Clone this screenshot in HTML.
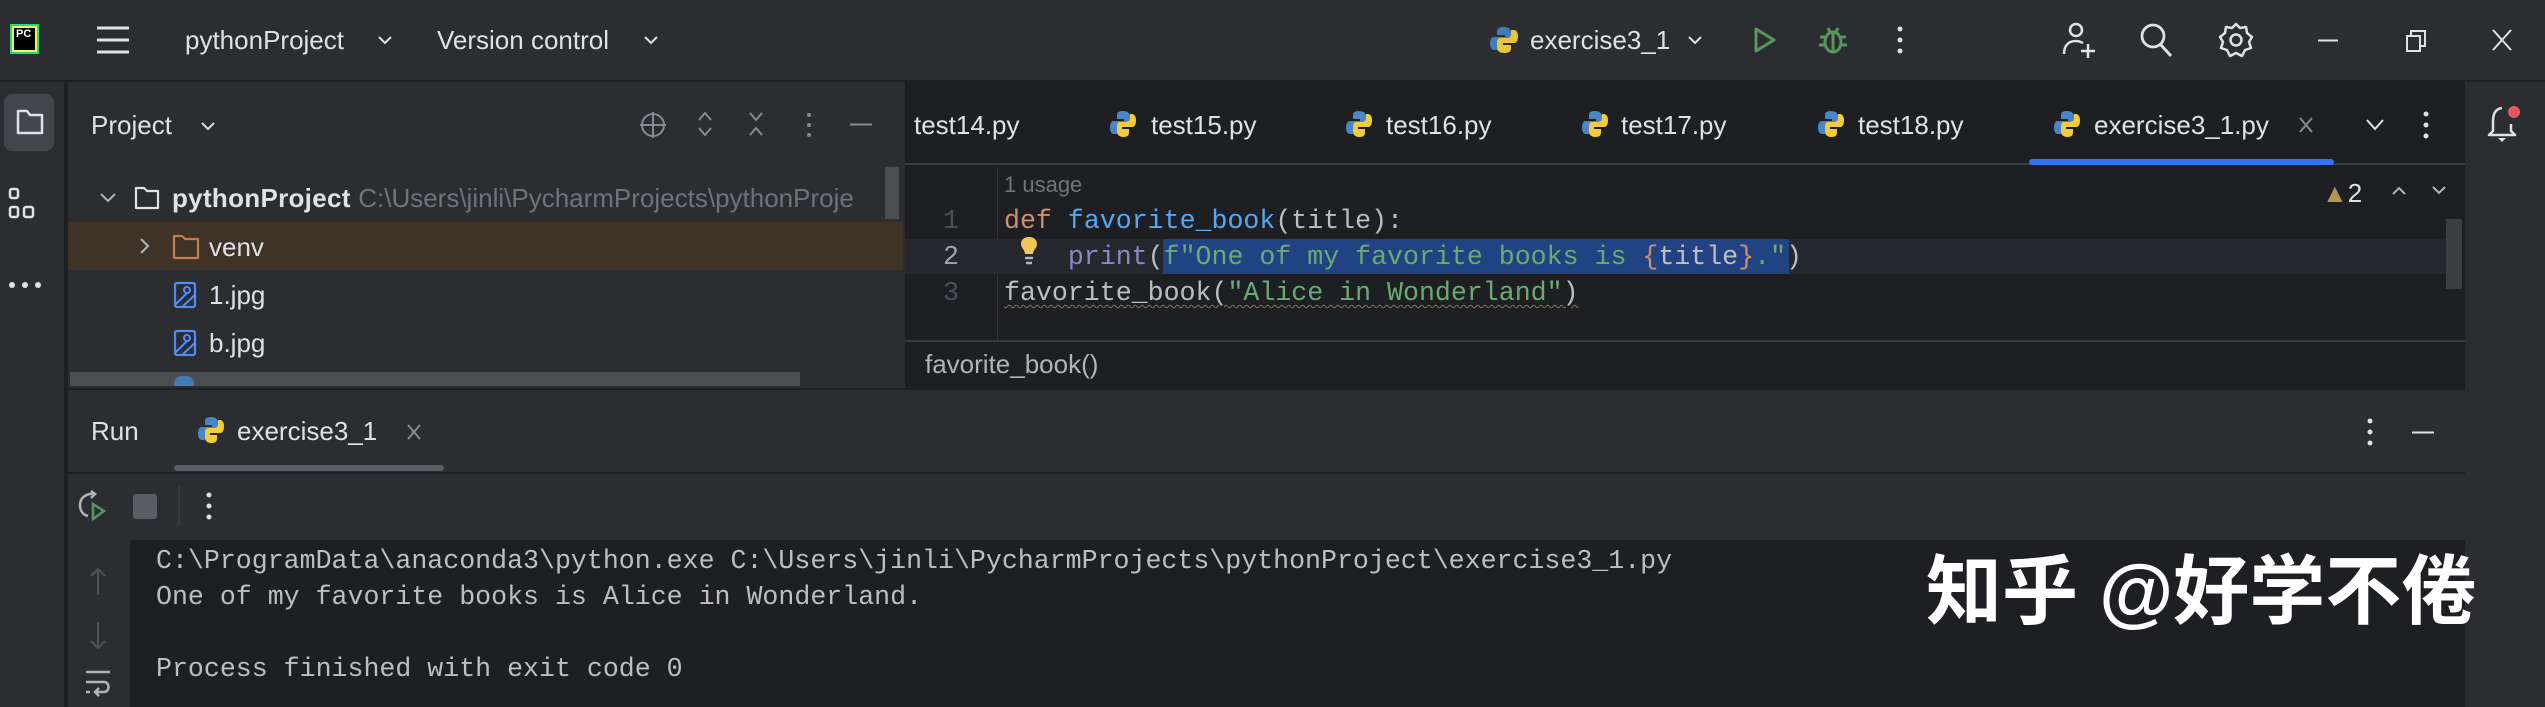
<!DOCTYPE html>
<html><head><meta charset="utf-8"><style>
*{margin:0;padding:0;box-sizing:border-box}
body{width:2545px;height:707px;background:#1e1f22;position:relative;overflow:hidden;font-family:"Liberation Sans","Noto Sans CJK SC",sans-serif;color:#dfe1e5}
.a{position:absolute;white-space:pre}
.s{font-size:26px;line-height:30px}
.m{font-family:"Liberation Mono",monospace;font-size:26.6px;line-height:36px}
.g{color:#6f737a}
svg{position:absolute;overflow:visible}
</style></head><body>
<!-- top bar -->
<div class="a" style="left:0;top:0;width:2545px;height:80px;background:#2b2d30"></div>
<div class="a" style="left:10px;top:24px;width:29px;height:30px;background:#21d789;"></div>
<div class="a" style="left:12px;top:26px;width:25px;height:26px;background:#fcf84a"></div>
<div class="a" style="left:14px;top:28px;width:21px;height:22px;background:#000;color:#fff;font-size:11px;font-weight:bold;line-height:12px;padding-left:2px;white-space:normal">PC<br>_</div>
<svg style="left:97px;top:26px" width="32" height="28"><path d="M0 2H32M0 14H32M0 26H32" stroke="#dfe1e5" stroke-width="3"/></svg>
<div class="a s" style="left:185px;top:25px">pythonProject</div>
<svg style="left:378px;top:36px" width="14" height="9"><path d="M1 1L7 7L13 1" stroke="#dfe1e5" stroke-width="2" fill="none"/></svg>
<div class="a s" style="left:437px;top:25px">Version control</div>
<svg style="left:644px;top:36px" width="14" height="9"><path d="M1 1L7 7L13 1" stroke="#dfe1e5" stroke-width="2" fill="none"/></svg>
<svg style="left:1490px;top:26px" width="28" height="28"><path d="M14 1C7 1 7 4 7 6V9H15V11H4C1 11 0 14 0 18C0 22 2 24 4 24H7V20C7 17 9 16 11 16H18C20 16 21 14 21 12V6C21 3 18 1 14 1Z" fill="#3f7cb8"/><path d="M14 27C21 27 21 24 21 22V19H13V17H24C27 17 28 14 28 10C28 6 26 4 24 4H21V8C21 11 19 12 17 12H10C8 12 7 14 7 16V22C7 25 10 27 14 27Z" fill="#e8c53e"/></svg>
<div class="a s" style="left:1530px;top:25px">exercise3_1</div>
<svg style="left:1688px;top:36px" width="14" height="9"><path d="M1 1L7 7L13 1" stroke="#dfe1e5" stroke-width="2" fill="none"/></svg>
<svg style="left:1754px;top:27px" width="22" height="26"><path d="M2 2L20 13L2 24Z" stroke="#57965c" stroke-width="3" fill="none" stroke-linejoin="round"/></svg>
<svg style="left:1818px;top:25px" width="30" height="30"><ellipse cx="15" cy="17" rx="8" ry="10" stroke="#57965c" stroke-width="3" fill="none"/><path d="M15 8V27M2 12H7M23 12H28M1 20H7M23 20H29M10 3L12 7M20 3L18 7" stroke="#57965c" stroke-width="3"/></svg>
<svg style="left:1897px;top:26px" width="6" height="28"><circle cx="3" cy="3" r="2.5" fill="#dfe1e5"/><circle cx="3" cy="14" r="2.5" fill="#dfe1e5"/><circle cx="3" cy="25" r="2.5" fill="#dfe1e5"/></svg>
<svg style="left:2062px;top:22px" width="34" height="36"><circle cx="14" cy="8" r="6" stroke="#dfe1e5" stroke-width="2.5" fill="none"/><path d="M2 32C2 22 8 19 14 19C17 19 19 20 21 21M26 22V36M19 29H33" stroke="#dfe1e5" stroke-width="2.5" fill="none"/></svg>
<svg style="left:2139px;top:22px" width="34" height="36"><circle cx="14" cy="14" r="11" stroke="#dfe1e5" stroke-width="2.8" fill="none"/><path d="M22 23L32 34" stroke="#dfe1e5" stroke-width="3"/></svg>
<svg style="left:2218px;top:22px" width="36" height="36"><circle cx="18" cy="18" r="5.5" stroke="#dfe1e5" stroke-width="2.5" fill="none"/><path d="M18 2L22 6L28 5L29 11L34 15L31 20L33 26L27 28L24 34L18 31L12 34L9 28L3 26L5 20L2 15L7 11L8 5L14 6Z" stroke="#dfe1e5" stroke-width="2.5" fill="none" stroke-linejoin="round"/></svg>
<svg style="left:2318px;top:39px" width="20" height="3"><path d="M0 1.5H20" stroke="#dfe1e5" stroke-width="2"/></svg>
<svg style="left:2406px;top:30px" width="20" height="22"><rect x="1" y="6" width="13" height="15" stroke="#dfe1e5" stroke-width="2" fill="none"/><path d="M5 6V1H19V16H14" stroke="#dfe1e5" stroke-width="2" fill="none"/></svg>
<svg style="left:2492px;top:29px" width="20" height="22"><path d="M1 1L19 21M19 1L1 21" stroke="#dfe1e5" stroke-width="2"/></svg>

<!-- left strip -->
<div class="a" style="left:0;top:82px;width:66px;height:625px;background:#2b2d30;border-right:2px solid #1e1f22"></div>
<div class="a" style="left:4px;top:94px;width:50px;height:57px;background:#43454a;border-radius:8px"></div>
<svg style="left:16px;top:109px" width="28" height="26"><path d="M2 2H11L14 6H26V24H2Z" stroke="#dfe1e5" stroke-width="2.5" fill="none" stroke-linejoin="round"/></svg>
<svg style="left:9px;top:188px" width="26" height="32"><rect x="1" y="1" width="8" height="9" rx="2" stroke="#dfe1e5" stroke-width="2.5" fill="none"/><rect x="1" y="19" width="8" height="10" rx="2" stroke="#dfe1e5" stroke-width="2.5" fill="none"/><rect x="15" y="19" width="9" height="10" rx="2" stroke="#dfe1e5" stroke-width="2.5" fill="none"/></svg>
<svg style="left:8px;top:281px" width="34" height="8"><circle cx="4" cy="4" r="3" fill="#dfe1e5"/><circle cx="17" cy="4" r="3" fill="#dfe1e5"/><circle cx="30" cy="4" r="3" fill="#dfe1e5"/></svg>

<!-- project panel -->
<div class="a" style="left:68px;top:82px;width:835px;height:306px;background:#2b2d30"></div>
<div class="a s" style="left:91px;top:110px">Project</div>
<svg style="left:201px;top:122px" width="14" height="9"><path d="M1 1L7 7L13 1" stroke="#dfe1e5" stroke-width="2" fill="none"/></svg>
<svg style="left:640px;top:110px" width="28" height="30"><circle cx="13" cy="15" r="11" stroke="#868a91" stroke-width="2" fill="none"/><path d="M13 2V28M0 15H26" stroke="#868a91" stroke-width="2"/></svg>
<svg style="left:697px;top:111px" width="16" height="26"><path d="M2 9L8 2L14 9M2 17L8 24L14 17" stroke="#868a91" stroke-width="2" fill="none"/></svg>
<svg style="left:748px;top:111px" width="16" height="26"><path d="M2 2L8 9L14 2M2 24L8 17L14 24" stroke="#868a91" stroke-width="2" fill="none"/></svg>
<svg style="left:806px;top:112px" width="6" height="26"><circle cx="3" cy="3" r="2" fill="#868a91"/><circle cx="3" cy="13" r="2" fill="#868a91"/><circle cx="3" cy="23" r="2" fill="#868a91"/></svg>
<svg style="left:850px;top:123px" width="22" height="3"><path d="M0 1.5H22" stroke="#868a91" stroke-width="2"/></svg>

<svg style="left:100px;top:193px" width="16" height="10"><path d="M1 1L8 8L15 1" stroke="#b0b3b8" stroke-width="2" fill="none"/></svg>
<svg style="left:134px;top:186px" width="26" height="24"><path d="M2 2H10L13 5H24V22H2Z" stroke="#dfe1e5" stroke-width="2.2" fill="none" stroke-linejoin="round"/></svg>
<div class="a s" style="left:172px;top:183px;font-weight:bold;letter-spacing:0.3px">pythonProject <span style="font-weight:normal;color:#6f737a;letter-spacing:0">C:\Users\jinli\PycharmProjects\pythonProje</span></div>
<div class="a" style="left:885px;top:167px;width:14px;height:52px;background:#4b4d50"></div>
<div class="a" style="left:68px;top:222px;width:835px;height:48px;background:#3e3326"></div>
<svg style="left:140px;top:238px" width="10" height="16"><path d="M1 1L8 8L1 15" stroke="#b0b3b8" stroke-width="2" fill="none"/></svg>
<svg style="left:172px;top:234px" width="28" height="26"><path d="M2 2H10L13 5H26V24H2Z" stroke="#c77b50" stroke-width="2.2" fill="none" stroke-linejoin="round"/></svg>
<div class="a s" style="left:209px;top:232px">venv</div>
<svg style="left:174px;top:282px" width="22" height="26"><rect x="1" y="1" width="20" height="24" rx="2" stroke="#548af7" stroke-width="2.2" fill="none"/><circle cx="13" cy="8" r="3" stroke="#548af7" stroke-width="2" fill="none"/><path d="M1 23L13 11M8 25L21 13" stroke="#548af7" stroke-width="2"/></svg>
<div class="a s" style="left:209px;top:280px">1.jpg</div>
<svg style="left:174px;top:330px" width="22" height="26"><rect x="1" y="1" width="20" height="24" rx="2" stroke="#548af7" stroke-width="2.2" fill="none"/><circle cx="13" cy="8" r="3" stroke="#548af7" stroke-width="2" fill="none"/><path d="M1 23L13 11M8 25L21 13" stroke="#548af7" stroke-width="2"/></svg>
<div class="a s" style="left:209px;top:328px">b.jpg</div>
<div class="a" style="left:70px;top:372px;width:730px;height:14px;background:#4b4d50"></div>
<div class="a" style="left:174px;top:376px;width:20px;height:10px;background:#3f7cb8;border-radius:8px 8px 0 0"></div>

<!-- editor -->
<div class="a" style="left:903px;top:82px;width:1562px;height:306px;background:#1e1f22;border-left:2px solid #2b2d30"></div>
<div class="a" style="left:905px;top:163px;width:1560px;height:2px;background:#393b40"></div>
<div class="a s" style="left:914px;top:110px;color:#dfe1e5">test14.py</div>
<div class="a s" style="left:1151px;top:110px">test15.py</div>
<div class="a s" style="left:1386px;top:110px">test16.py</div>
<div class="a s" style="left:1621px;top:110px">test17.py</div>
<div class="a s" style="left:1858px;top:110px">test18.py</div>
<div class="a s" style="left:2094px;top:110px">exercise3_1.py</div>
<svg style="left:2299px;top:117px" width="14" height="16"><path d="M1 1L13 15M13 1L1 15" stroke="#868a91" stroke-width="2"/></svg>
<div class="a" style="left:2029px;top:159px;width:305px;height:6px;background:#3574f0;border-radius:3px"></div>
<svg style="left:2366px;top:119px" width="18" height="12"><path d="M1 1L9 10L17 1" stroke="#dfe1e5" stroke-width="2" fill="none"/></svg>
<svg style="left:2423px;top:111px" width="6" height="28"><circle cx="3" cy="3" r="2.5" fill="#dfe1e5"/><circle cx="3" cy="14" r="2.5" fill="#dfe1e5"/><circle cx="3" cy="25" r="2.5" fill="#dfe1e5"/></svg>
<svg style="left:1110px;top:110px" width="26" height="28"><path d="M13 1C7 1 7 4 7 6V9H14V11H4C1 11 0 14 0 18C0 22 2 24 4 24H7V20C7 17 9 16 11 16H17C19 16 20 14 20 12V6C20 3 17 1 13 1Z" fill="#4a86c7"/><path d="M13 27C19 27 19 24 19 22V19H12V17H22C25 17 26 14 26 10C26 6 24 4 22 4H20V8C20 11 18 12 16 12H10C8 12 7 14 7 16V22C7 25 10 27 13 27Z" fill="#f2cc3a"/></svg>
<svg style="left:1346px;top:110px" width="26" height="28"><path d="M13 1C7 1 7 4 7 6V9H14V11H4C1 11 0 14 0 18C0 22 2 24 4 24H7V20C7 17 9 16 11 16H17C19 16 20 14 20 12V6C20 3 17 1 13 1Z" fill="#4a86c7"/><path d="M13 27C19 27 19 24 19 22V19H12V17H22C25 17 26 14 26 10C26 6 24 4 22 4H20V8C20 11 18 12 16 12H10C8 12 7 14 7 16V22C7 25 10 27 13 27Z" fill="#f2cc3a"/></svg>
<svg style="left:1582px;top:110px" width="26" height="28"><path d="M13 1C7 1 7 4 7 6V9H14V11H4C1 11 0 14 0 18C0 22 2 24 4 24H7V20C7 17 9 16 11 16H17C19 16 20 14 20 12V6C20 3 17 1 13 1Z" fill="#4a86c7"/><path d="M13 27C19 27 19 24 19 22V19H12V17H22C25 17 26 14 26 10C26 6 24 4 22 4H20V8C20 11 18 12 16 12H10C8 12 7 14 7 16V22C7 25 10 27 13 27Z" fill="#f2cc3a"/></svg>
<svg style="left:1818px;top:110px" width="26" height="28"><path d="M13 1C7 1 7 4 7 6V9H14V11H4C1 11 0 14 0 18C0 22 2 24 4 24H7V20C7 17 9 16 11 16H17C19 16 20 14 20 12V6C20 3 17 1 13 1Z" fill="#4a86c7"/><path d="M13 27C19 27 19 24 19 22V19H12V17H22C25 17 26 14 26 10C26 6 24 4 22 4H20V8C20 11 18 12 16 12H10C8 12 7 14 7 16V22C7 25 10 27 13 27Z" fill="#f2cc3a"/></svg>
<svg style="left:2054px;top:110px" width="26" height="28"><path d="M13 1C7 1 7 4 7 6V9H14V11H4C1 11 0 14 0 18C0 22 2 24 4 24H7V20C7 17 9 16 11 16H17C19 16 20 14 20 12V6C20 3 17 1 13 1Z" fill="#4a86c7"/><path d="M13 27C19 27 19 24 19 22V19H12V17H22C25 17 26 14 26 10C26 6 24 4 22 4H20V8C20 11 18 12 16 12H10C8 12 7 14 7 16V22C7 25 10 27 13 27Z" fill="#f2cc3a"/></svg>

<div class="a" style="left:997px;top:167px;width:1px;height:174px;background:#313438"></div>
<div class="a" style="left:905px;top:239px;width:1541px;height:35px;background:#26282e"></div>
<div class="a" style="left:1004px;top:172px;font-size:22px;color:#6f737a">1 usage</div>
<div class="a" style="left:2322px;top:178px;font-size:26px;color:#dfe1e5"><span style="color:#b7954a">▲</span>2</div>
<svg style="left:2392px;top:186px" width="14" height="9"><path d="M1 8L7 2L13 8" stroke="#b0b3b8" stroke-width="2" fill="none"/></svg>
<svg style="left:2432px;top:186px" width="14" height="9"><path d="M1 1L7 7L13 1" stroke="#b0b3b8" stroke-width="2" fill="none"/></svg>
<div class="a m" style="left:943px;top:203px;color:#4b5059">1</div>
<div class="a m" style="left:943px;top:239px;color:#a1a3ab">2</div>
<div class="a m" style="left:943px;top:275px;color:#4b5059">3</div>
<div class="a" style="left:1163px;top:239px;width:626px;height:35px;background:#214283"></div>
<div class="a m" style="left:1004px;top:203px;color:#bcbec4"><span style="color:#cf8e6d">def</span> <span style="color:#56a8f5">favorite_book</span>(title):</div>
<div class="a m" style="left:1004px;top:239px;color:#bcbec4">    <span style="color:#8888c6">print</span>(<span style="color:#6aab73">f"One of my favorite books is </span><span style="color:#cf8e6d">{</span>title<span style="color:#cf8e6d">}</span><span style="color:#6aab73">."</span>)</div>
<svg style="left:1020px;top:236px" width="18" height="30"><path d="M9 1C3 1 1 5 1 8C1 12 5 14 5 18H13C13 14 17 12 17 8C17 5 15 1 9 1Z" fill="#f2c55c"/><path d="M5 22H13M6 27H12" stroke="#b0b3b8" stroke-width="2.5"/></svg>
<div class="a m" style="left:1004px;top:275px;color:#bcbec4;text-decoration:underline wavy #8a7a40;text-decoration-thickness:1px;text-underline-offset:4px">favorite_book(<span style="color:#6aab73">"Alice in Wonderland"</span>)</div>
<div class="a" style="left:2446px;top:219px;width:16px;height:70px;background:#3c3e42"></div>
<div class="a" style="left:905px;top:340px;width:1560px;height:2px;background:#393b40"></div>
<div class="a s" style="left:925px;top:349px;color:#b0b3b8">favorite_book()</div>

<!-- right strip -->
<div class="a" style="left:2465px;top:82px;width:80px;height:625px;background:#2b2d30"></div>
<svg style="left:2488px;top:104px" width="34" height="40"><path d="M14 4C6 5 5 12 5 18V27L1 31H27L23 27V20" stroke="#dfe1e5" stroke-width="2.5" fill="none" stroke-linejoin="round"/><path d="M10 34H18L14 38Z" fill="#dfe1e5"/><circle cx="26" cy="8" r="6" fill="#e55765"/></svg>

<!-- run panel -->
<div class="a" style="left:68px;top:388px;width:2397px;height:84px;background:#2b2d30;border-top:2px solid #1e1f22"></div>
<div class="a s" style="left:91px;top:416px">Run</div>
<svg style="left:198px;top:416px" width="26" height="28"><path d="M13 1C7 1 7 4 7 6V9H14V11H4C1 11 0 14 0 18C0 22 2 24 4 24H7V20C7 17 9 16 11 16H17C19 16 20 14 20 12V6C20 3 17 1 13 1Z" fill="#4a86c7"/><path d="M13 27C19 27 19 24 19 22V19H12V17H22C25 17 26 14 26 10C26 6 24 4 22 4H20V8C20 11 18 12 16 12H10C8 12 7 14 7 16V22C7 25 10 27 13 27Z" fill="#f2cc3a"/></svg>
<div class="a s" style="left:237px;top:416px">exercise3_1</div>
<svg style="left:407px;top:424px" width="14" height="16"><path d="M1 1L13 15M13 1L1 15" stroke="#868a91" stroke-width="2"/></svg>
<div class="a" style="left:174px;top:465px;width:270px;height:6px;background:#5a5d63;border-radius:3px"></div>
<svg style="left:2367px;top:418px" width="6" height="28"><circle cx="3" cy="3" r="2.5" fill="#dfe1e5"/><circle cx="3" cy="14" r="2.5" fill="#dfe1e5"/><circle cx="3" cy="25" r="2.5" fill="#dfe1e5"/></svg>
<svg style="left:2412px;top:431px" width="22" height="3"><path d="M0 1.5H22" stroke="#dfe1e5" stroke-width="2"/></svg>
<div class="a" style="left:68px;top:472px;width:2397px;height:68px;background:#2b2d30;border-top:2px solid #1e1f22"></div>
<svg style="left:78px;top:490px" width="28" height="32"><path d="M16 4C8 3 2 8 2 15C2 22 6 25 10 26" stroke="#b0b3b8" stroke-width="2.5" fill="none"/><path d="M13 1L17 4L13 8" stroke="#b0b3b8" stroke-width="2.5" fill="none"/><path d="M15 14L26 21L15 29Z" stroke="#57965c" stroke-width="2.5" fill="none"/></svg>
<div class="a" style="left:133px;top:494px;width:24px;height:25px;background:#5a5d63;border-radius:3px"></div>
<div class="a" style="left:178px;top:486px;width:2px;height:40px;background:#393b40"></div>
<svg style="left:206px;top:492px" width="6" height="28"><circle cx="3" cy="3" r="2.5" fill="#dfe1e5"/><circle cx="3" cy="14" r="2.5" fill="#dfe1e5"/><circle cx="3" cy="25" r="2.5" fill="#dfe1e5"/></svg>
<div class="a" style="left:68px;top:540px;width:62px;height:167px;background:#2b2d30"></div>
<svg style="left:89px;top:567px" width="18" height="30"><path d="M9 2V28M2 9L9 2L16 9" stroke="#4e5157" stroke-width="2" fill="none"/></svg>
<svg style="left:89px;top:620px" width="18" height="30"><path d="M9 2V28M2 21L9 28L16 21" stroke="#4e5157" stroke-width="2" fill="none"/></svg>
<svg style="left:84px;top:670px" width="28" height="28"><path d="M2 2H26M2 12H20C26 12 26 22 20 22H12M15 18L11 22L15 26M2 22H6" stroke="#b0b3b8" stroke-width="2.5" fill="none"/></svg>
<div class="a m" style="left:156px;top:543px;color:#bcbec4">C:\ProgramData\anaconda3\python.exe C:\Users\jinli\PycharmProjects\pythonProject\exercise3_1.py</div>
<div class="a m" style="left:156px;top:579px;color:#bcbec4">One of my favorite books is Alice in Wonderland.</div>
<div class="a m" style="left:156px;top:651px;color:#bcbec4">Process finished with exit code 0</div>
<div class="a" style="left:1926px;top:550px;font-size:76px;line-height:86px;color:#fff;font-family:'Liberation Sans','Noto Sans CJK SC',sans-serif;font-weight:bold">知乎 @好学不倦</div>
</body></html>
